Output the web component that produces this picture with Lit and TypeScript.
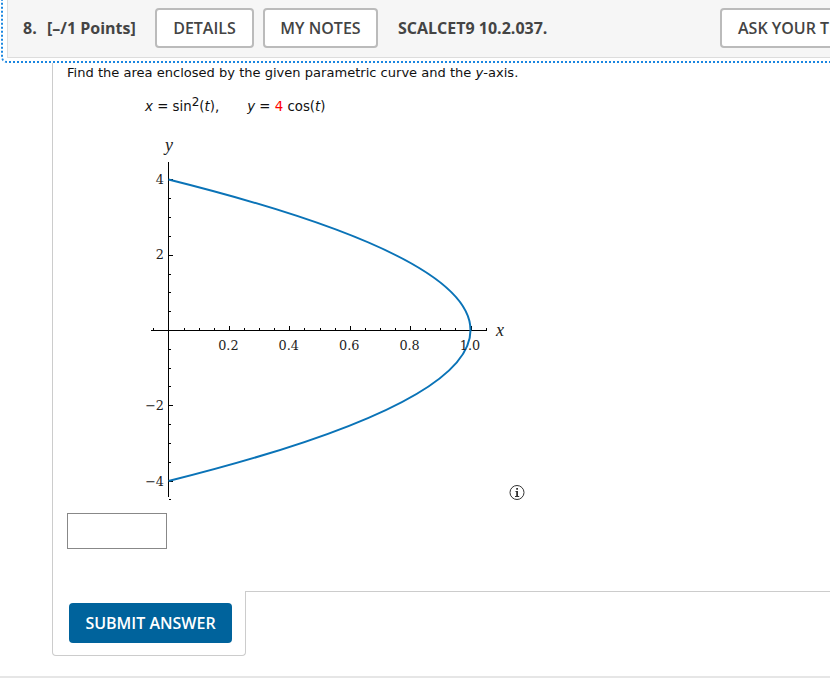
import { LitElement, html, css, svg } from 'lit';
import { customElement } from 'lit/decorators.js';

const X0 = 168.5;
const Y0 = 330;
const X_UNIT = 302;
const Y_UNIT = 37.65;

// ticks every 0.05, from -0.05 up to 1.05, a longer one at each 0.2
const xTicks = Array.from({ length: 23 }, (_, i) => i - 1)
    .filter((i) => i !== 0)
    .map((i) => ({
        x: Math.round(X0 + (i * X_UNIT) / 20) + 0.5,
        major: i % 4 === 0,
    }));

const xLabels = ['0.2', '0.4', '0.6', '0.8', '1.0'];

const yTicks = [-4.5, -4, -3.5, -3, -2.5, -2, -1.5, -1, -0.5, 0.5, 1, 1.5, 2, 2.5, 3, 3.5, 4];

@customElement('parametric-graph')
export class ParametricGraph extends LitElement {
    static styles = css`
        :host {
            display: block;
            width: 400px;
            height: 370px;
        }

        svg {
            display: block;
        }

        .axis {
            stroke: #000;
            stroke-width: 1;
            fill: none;
        }

        .curve {
            stroke: #0a73b7;
            stroke-width: 2;
            fill: none;
        }

        .label {
            font-family: 'DejaVu Serif', serif;
            font-size: 12.8px;
            fill: #222;
        }

        .var {
            font-family: 'Liberation Serif', serif;
            font-size: 18px;
            font-style: italic;
            fill: #222;
        }

        .info {
            stroke: #333;
            fill: none;
        }
    `;

    render() {
        return html`
            <svg width="400" height="370" viewBox="140 135 400 370">
                <path class="axis" d="M151 330.5H487M168.5 162V497"></path>
                ${xTicks.map((t) => svg`
                    <path class="axis" d="M${t.x} 330V${t.major ? 326 : 328}"></path>
                `)}
                ${yTicks.map((v) => {
                    const y = Math.round(Y0 - v * Y_UNIT) + 0.5;
                    const major = Number.isInteger(v) && v % 2 === 0;
                    return svg`<path class="axis" d="M169 ${y}H${major ? 173 : 171}"></path>`;
                })}
                <path class="curve" d="M168.5 179.5Q772.5 330 168.5 481"></path>
                ${xLabels.map((l, i) => svg`
                    <text class="label" x=${X0 + ((i + 1) * X_UNIT) / 5 - 0.5} y="350" text-anchor="middle">${l}</text>
                `)}
                <text class="label" x="164" y="184" text-anchor="end">4</text>
                <text class="label" x="164" y="259" text-anchor="end">2</text>
                <text class="label" x="164" y="410" text-anchor="end">−2</text>
                <text class="label" x="164" y="486" text-anchor="end">−4</text>
                <text class="var" x="165" y="151">y</text>
                <text class="var" x="496" y="336">x</text>
                <circle class="info" cx="517" cy="492.5" r="7"></circle>
                <path d="M515.5 491H518V496H519.2V497H515V496H516.2V492H515.5ZM516.2 488H518V489.8H516.2Z" fill="#333"></path>
            </svg>
        `;
    }
}

@customElement('app-root')
export class AppRoot extends LitElement {
    static styles = css`
        :host {
            display: block;
            width: 830px;
            height: 678px;
            overflow: hidden;
            background: #fff;
            position: relative;
            font-family: 'Open Sans', sans-serif;
        }

        .focus {
            width: 1000px;
            margin-top: -12px;
            margin-left: 1px;
            padding-left: 4px;
            padding-bottom: 3px;
            border: 2px dotted #1a86e0;
            border-radius: 0 0 0 6px;
        }

        .head {
            display: flex;
            align-items: center;
            height: 68px;
            box-sizing: border-box;
            padding-top: 9px;
            padding-left: 15px;
            background: #f6f6f6;
            border-left: 1px solid #ddd;
            border-bottom: 1px solid #ddd;
            color: #444;
            font-size: 16px;
            font-weight: 700;
        }

        .head > span {
            flex: none;
        }

        .num {
            width: 24px;
        }

        .points {
            width: 108px;
        }

        .btn {
            display: flex;
            align-items: center;
            justify-content: center;
            box-sizing: border-box;
            height: 40px;
            border: 2px solid #bbb;
            border-radius: 4px;
            background: #fff;
            font-weight: 600;
            color: #444;
        }

        .details {
            width: 99px;
            margin-right: 9px;
        }

        .notes {
            width: 115px;
            margin-right: 20px;
        }

        .code {
            width: 322px;
        }

        .ask {
            width: 200px;
            justify-content: flex-start;
            padding-left: 16px;
        }

        .body {
            margin-left: 52px;
            border-left: 1px solid #ccc;
            padding: 0 0 0 14px;
            height: 528px;
            box-sizing: border-box;
            font-family: 'DejaVu Sans', sans-serif;
            font-size: 13.06px;
            color: #111;
        }

        .prompt {
            margin: 0;
            padding-top: 2px;
            line-height: 16px;
        }

        .formula {
            display: flex;
            gap: 28px;
            margin: 18px 0 0 78px;
            font-size: 13.33px;
            line-height: 16px;
        }

        sup {
            font-size: 12px;
            line-height: 0;
        }

        .red {
            color: #f00;
        }

        parametric-graph {
            margin: 20px 0 0 73px;
        }

        .answer {
            display: block;
            box-sizing: border-box;
            width: 100px;
            height: 36px;
            margin-top: 8px;
            border: 1px solid #888;
            background: #fff;
        }

        .foot {
            display: flex;
            margin-left: 52px;
            height: 65px;
        }

        .submit-cell {
            box-sizing: border-box;
            width: 194px;
            padding: 12px 0 0 16px;
            border: 1px solid #ccc;
            border-top: none;
            border-radius: 0 0 4px 4px;
        }

        .submit {
            display: flex;
            align-items: center;
            justify-content: center;
            width: 163px;
            height: 40px;
            border-radius: 4px;
            background: #00639c;
            color: #fff;
            font-size: 16px;
            font-weight: 600;
        }

        .rest {
            flex: 1;
            border-top: 1px solid #ccc;
        }

        .end {
            margin-top: 20px;
            border-top: 2px solid #e6e6e6;
        }
    `;

    render() {
        return html`
            <div class="focus">
                <div class="head">
                    <span class="num">8.</span>
                    <span class="points">[–/1 Points]</span>
                    <span class="btn details">DETAILS</span>
                    <span class="btn notes">MY NOTES</span>
                    <span class="code">SCALCET9 10.2.037.</span>
                    <span class="btn ask">ASK YOUR TEACHER</span>
                </div>
            </div>
            <div class="body">
                <p class="prompt">Find the area enclosed by the given parametric curve and the <i>y</i>-axis.</p>
                <div class="formula">
                    <span><i>x</i> = sin<sup>2</sup>(<i>t</i>),</span>
                    <span><i>y</i> = <span class="red">4</span> cos(<i>t</i>)</span>
                </div>
                <parametric-graph></parametric-graph>
                <div class="answer"></div>
            </div>
            <div class="foot">
                <div class="submit-cell"><div class="submit">SUBMIT ANSWER</div></div>
                <div class="rest"></div>
            </div>
            <div class="end"></div>
        `;
    }
}
